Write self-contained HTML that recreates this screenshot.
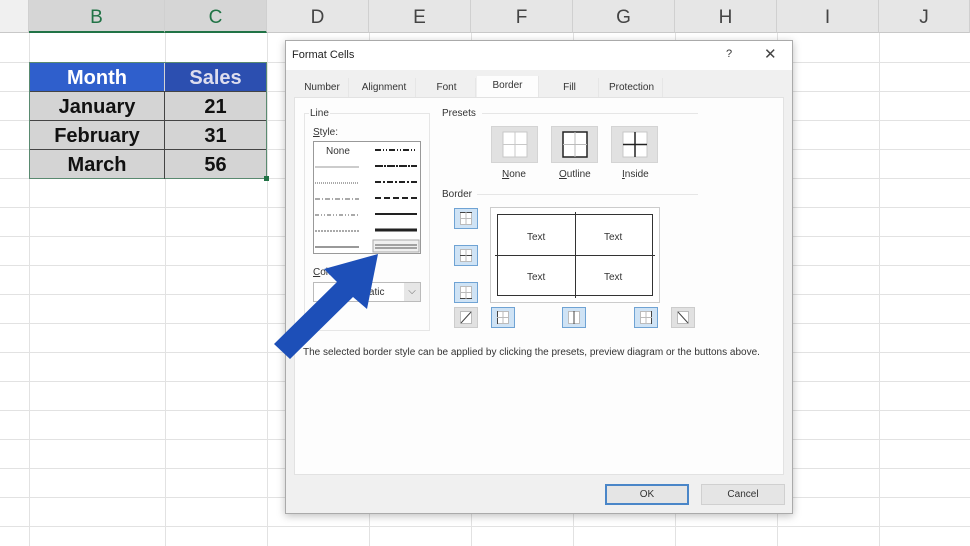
<!DOCTYPE html>
<html><head><meta charset="utf-8"><style>
*{margin:0;padding:0;box-sizing:border-box}
body{width:970px;height:546px;overflow:hidden;background:#fff;font-family:"Liberation Sans",sans-serif;position:relative}
.a{position:absolute}
.hdr{top:0;height:33px;background:#e6e6e6;border-right:1px solid #d0d0d0;border-bottom:1px solid #c8c8c8;text-align:center;font-size:19px;line-height:36px;color:#444}
.hl{height:1px;background:#e2e2e2;left:0;width:970px}
.vl{width:1px;background:#e2e2e2;top:33px;height:513px}
.cell{font-weight:bold;font-size:20px;text-align:center;line-height:31px;height:29px;color:#111}
.dl{font-family:"Liberation Sans",sans-serif;font-size:10px;color:#333}
.tab{top:78px;height:19px;font-size:10px;color:#333;text-align:center;line-height:20px;background:#f0f0f0;border-right:1px solid #e6e6e6}
.btn{background:#e5e5e5;border:1px solid #d0d0d0}
.bb{background:#cfe3f5;border:1px solid #6fa3d4;width:24px;height:21px}
</style></head><body>
<div class="a hdr" style="left:0;width:29px;background:#f0f0f0"></div>
<div class="a hdr" style="left:29px;width:136px;color:#217346;border-bottom:2px solid #217346;background:#d6d6d6">B</div>
<div class="a hdr" style="left:165px;width:102px;color:#217346;border-bottom:2px solid #217346;background:#d6d6d6">C</div>
<div class="a hdr" style="left:267px;width:102px">D</div>
<div class="a hdr" style="left:369px;width:102px">E</div>
<div class="a hdr" style="left:471px;width:102px">F</div>
<div class="a hdr" style="left:573px;width:102px">G</div>
<div class="a hdr" style="left:675px;width:102px">H</div>
<div class="a hdr" style="left:777px;width:102px">I</div>
<div class="a hdr" style="left:879px;width:91px">J</div>
<div class="a hl" style="top:62px"></div><div class="a hl" style="top:91px"></div><div class="a hl" style="top:120px"></div><div class="a hl" style="top:149px"></div><div class="a hl" style="top:178px"></div><div class="a hl" style="top:207px"></div><div class="a hl" style="top:236px"></div><div class="a hl" style="top:265px"></div><div class="a hl" style="top:294px"></div><div class="a hl" style="top:323px"></div><div class="a hl" style="top:352px"></div><div class="a hl" style="top:381px"></div><div class="a hl" style="top:410px"></div><div class="a hl" style="top:439px"></div><div class="a hl" style="top:468px"></div><div class="a hl" style="top:497px"></div><div class="a hl" style="top:526px"></div>
<div class="a vl" style="left:29px"></div><div class="a vl" style="left:165px"></div><div class="a vl" style="left:267px"></div><div class="a vl" style="left:369px"></div><div class="a vl" style="left:471px"></div><div class="a vl" style="left:573px"></div><div class="a vl" style="left:675px"></div><div class="a vl" style="left:777px"></div><div class="a vl" style="left:879px"></div>
<div class="a" style="left:29px;top:62px;width:238px;height:117px;border:1px solid #5a8a70;background:#d4d4d4"></div>
<div class="a cell" style="left:30px;top:63px;width:134px;background:#2f5fcc;color:#fff">Month</div>
<div class="a cell" style="left:165px;top:63px;width:101px;background:#2c4fb0;color:#dde">Sales</div>
<div class="a cell" style="left:30px;top:92px;width:134px">January</div>
<div class="a cell" style="left:165px;top:92px;width:101px">21</div>
<div class="a cell" style="left:30px;top:121px;width:134px">February</div>
<div class="a cell" style="left:165px;top:121px;width:101px">31</div>
<div class="a cell" style="left:30px;top:150px;width:134px">March</div>
<div class="a cell" style="left:165px;top:150px;width:101px">56</div>
<div class="a" style="left:164px;top:91px;width:1px;height:88px;background:#444"></div>
<div class="a" style="left:30px;top:120px;width:236px;height:1px;background:#444"></div>
<div class="a" style="left:30px;top:149px;width:236px;height:1px;background:#444"></div>
<div class="a" style="left:30px;top:91px;width:236px;height:1px;background:#444"></div>
<div class="a" style="left:264px;top:176px;width:5px;height:5px;background:#217346"></div>
<div class="a" style="left:285px;top:40px;width:508px;height:474px;background:#f0f0f0;border:1px solid #aaa;box-shadow:0 2px 8px rgba(0,0,0,.25)"></div>
<div class="a" style="left:286px;top:41px;width:506px;height:29px;background:#fff"></div>
<div class="a dl" style="left:292px;top:49px;font-size:11px;color:#222">Format Cells</div>
<div class="a dl" style="left:726px;top:48px;font-size:11px">?</div>
<div class="a dl" style="left:764px;top:45px;font-size:15px;color:#444">✕</div>
<div class="a tab" style="left:296px;width:53px">Number</div>
<div class="a tab" style="left:353px;width:63px">Alignment</div>
<div class="a tab" style="left:418px;width:58px">Font</div>
<div class="a tab" style="left:477px;top:76px;height:22px;width:62px;background:#fdfdfd">Border</div>
<div class="a tab" style="left:541px;width:58px">Fill</div>
<div class="a tab" style="left:601px;width:62px">Protection</div>
<div class="a" style="left:294px;top:97px;width:490px;height:378px;background:#fdfdfd;border:1px solid #e2e2e2"></div>
<div class="a" style="left:304px;top:113px;width:126px;height:218px;border:1px solid #e6e6e6"></div>
<div class="a dl" style="left:309px;top:108px;background:#fdfdfd;padding:0 1px">Line</div>
<div class="a dl" style="left:313px;top:127px"><u>S</u>tyle:</div>
<div class="a" style="left:313px;top:141px;width:108px;height:113px;border:1px solid #999;background:#fff"></div>
<div class="a dl" style="left:326px;top:146px">None</div>
<svg class="a" style="left:313px;top:141px" width="108" height="113">
<g stroke="#555" stroke-width="1">
<line x1="2" y1="26" x2="46" y2="26" stroke="#999"/>
<line x1="2" y1="42" x2="46" y2="42" stroke-dasharray="1 1"/>
<line x1="2" y1="58" x2="46" y2="58" stroke-dasharray="5 2 1 2"/>
<line x1="2" y1="74" x2="46" y2="74" stroke-dasharray="4 2 1 2 1 2"/>
<line x1="2" y1="90" x2="46" y2="90" stroke-dasharray="2 1"/>
<line x1="2" y1="106" x2="46" y2="106" stroke="#333"/>
<g stroke="#222" stroke-width="2">
<line x1="62" y1="9" x2="104" y2="9" stroke-dasharray="6 2 1 2 1 2"/>
<line x1="62" y1="25" x2="104" y2="25" stroke-dasharray="8 1 2 1"/>
<line x1="62" y1="41" x2="104" y2="41" stroke-dasharray="6 2 2 2"/>
<line x1="62" y1="57" x2="104" y2="57" stroke-dasharray="6 3"/>
<line x1="62" y1="73" x2="104" y2="73"/>
<line x1="62" y1="89" x2="104" y2="89" stroke-width="3"/>
</g>
<rect x="60" y="99" width="46" height="12" fill="#f0f0f0" stroke="#aaa"/>
<line x1="62" y1="104" x2="104" y2="104" stroke="#555"/>
<line x1="62" y1="107" x2="104" y2="107" stroke="#555"/>
</g></svg>
<div class="a dl" style="left:313px;top:267px"><u>C</u>olor:</div>
<div class="a" style="left:313px;top:282px;width:108px;height:20px;background:#fff;border:1px solid #bbb"></div>
<div class="a dl" style="left:340px;top:287px">Automatic</div>
<div class="a" style="left:404px;top:283px;width:16px;height:18px;background:#e6e6e6;color:#666;font-size:10px;text-align:center;line-height:18px">⌵</div>
<div class="a dl" style="left:442px;top:108px">Presets</div>
<div class="a" style="left:482px;top:113px;width:216px;height:1px;background:#e6e6e6"></div>
<div class="a" style="left:491px;top:126px;width:47px;height:37px;background:#e1e1e1;border:1px solid #d4d4d4"></div>
<div class="a" style="left:551px;top:126px;width:47px;height:37px;background:#e1e1e1;border:1px solid #d4d4d4"></div>
<div class="a" style="left:611px;top:126px;width:47px;height:37px;background:#e1e1e1;border:1px solid #d4d4d4"></div>
<svg class="a" style="left:491px;top:126px" width="170" height="37" fill="none">
<rect x="12" y="6" width="24" height="25" fill="#fff" stroke="#c8c8c8"/><line x1="24" y1="6" x2="24" y2="31" stroke="#c8c8c8"/><line x1="12" y1="18.5" x2="36" y2="18.5" stroke="#c8c8c8"/>
<rect x="72" y="6" width="24" height="25" fill="#fff" stroke="#222" stroke-width="1.5"/><line x1="84" y1="6" x2="84" y2="31" stroke="#bbb"/><line x1="72" y1="18.5" x2="96" y2="18.5" stroke="#bbb"/>
<rect x="132" y="6" width="24" height="25" fill="#fff" stroke="#c8c8c8"/><line x1="144" y1="6" x2="144" y2="31" stroke="#222" stroke-width="1.5"/><line x1="132" y1="18.5" x2="156" y2="18.5" stroke="#222" stroke-width="1.5"/>
</svg>
<div class="a dl" style="left:502px;top:169px"><u>N</u>one</div>
<div class="a dl" style="left:559px;top:169px"><u>O</u>utline</div>
<div class="a dl" style="left:622px;top:169px"><u>I</u>nside</div>
<div class="a dl" style="left:442px;top:189px">Border</div>
<div class="a" style="left:477px;top:194px;width:221px;height:1px;background:#e6e6e6"></div>
<div class="a" style="left:490px;top:207px;width:170px;height:96px;background:#fff;border:1px solid #ccc"></div>
<svg class="a" style="left:490px;top:207px" width="170" height="96" fill="none" stroke="#333">
<rect x="7.5" y="7.5" width="155" height="81"/><line x1="85.5" y1="5" x2="85.5" y2="91"/><line x1="5" y1="48.5" x2="165" y2="48.5"/>
</svg>
<div class="a dl" style="left:527px;top:232px">Text</div><div class="a dl" style="left:604px;top:232px">Text</div>
<div class="a dl" style="left:527px;top:272px">Text</div><div class="a dl" style="left:604px;top:272px">Text</div>
<div class="a bb" style="left:454px;top:208px"></div>
<div class="a bb" style="left:454px;top:245px"></div>
<div class="a bb" style="left:454px;top:282px"></div>
<div class="a bb" style="left:491px;top:307px"></div>
<div class="a bb" style="left:562px;top:307px"></div>
<div class="a bb" style="left:634px;top:307px"></div>
<div class="a" style="left:454px;top:307px;width:24px;height:21px;background:#e1e1e1;border:1px solid #ccc"></div>
<div class="a" style="left:671px;top:307px;width:24px;height:21px;background:#e1e1e1;border:1px solid #ccc"></div>
<svg class="a" style="left:454px;top:208px" width="245" height="122" fill="none" stroke="#444" stroke-width="1">
<rect x="6.5" y="4.5" width="11" height="12" stroke="#bbb" fill="#fff"/><line x1="6" y1="4.5" x2="18" y2="4.5"/><line x1="12" y1="4" x2="12" y2="17" stroke="#bbb"/><line x1="6" y1="10.5" x2="18" y2="10.5" stroke="#bbb"/>
<rect x="6.5" y="41.5" width="11" height="12" stroke="#bbb" fill="#fff"/><line x1="6" y1="47.5" x2="18" y2="47.5"/><line x1="12" y1="41" x2="12" y2="54" stroke="#bbb"/>
<rect x="6.5" y="78.5" width="11" height="12" stroke="#bbb" fill="#fff"/><line x1="6" y1="90.5" x2="18" y2="90.5"/><line x1="12" y1="78" x2="12" y2="91" stroke="#bbb"/><line x1="6" y1="84.5" x2="18" y2="84.5" stroke="#bbb"/>
<rect x="6.5" y="103.5" width="11" height="12" fill="#fff" stroke="#bbb"/><line x1="7" y1="115" x2="17" y2="104"/>
<rect x="43.5" y="103.5" width="11" height="12" stroke="#bbb" fill="#fff"/><line x1="43.5" y1="103" x2="43.5" y2="116"/><line x1="49" y1="103" x2="49" y2="116" stroke="#bbb"/><line x1="43" y1="109.5" x2="55" y2="109.5" stroke="#bbb"/>
<rect x="114.5" y="103.5" width="11" height="12" stroke="#bbb" fill="#fff"/><line x1="120" y1="103" x2="120" y2="116"/>
<rect x="186.5" y="103.5" width="11" height="12" stroke="#bbb" fill="#fff"/><line x1="197.5" y1="103" x2="197.5" y2="116"/><line x1="192" y1="103" x2="192" y2="116" stroke="#bbb"/><line x1="186" y1="109.5" x2="198" y2="109.5" stroke="#bbb"/>
<rect x="223.5" y="103.5" width="11" height="12" fill="#fff" stroke="#bbb"/><line x1="224" y1="104" x2="234" y2="115"/>
</svg>
<div class="a dl" style="left:303px;top:347px;white-space:nowrap">The selected border style can be applied by clicking the presets, preview diagram or the buttons above.</div>
<div class="a btn" style="left:605px;top:484px;width:84px;height:21px;border:2px solid #4a86c8;text-align:center;font-size:10px;line-height:17px;color:#333">OK</div>
<div class="a btn" style="left:701px;top:484px;width:84px;height:21px;text-align:center;font-size:10px;line-height:19px;color:#333">Cancel</div>
<svg class="a" style="left:0;top:0" width="970" height="546">
<polygon points="378,254 367,309 353,297 290,359 274,344 337,282 324,269" fill="#1d4fb8"/>
</svg>
</body></html>
